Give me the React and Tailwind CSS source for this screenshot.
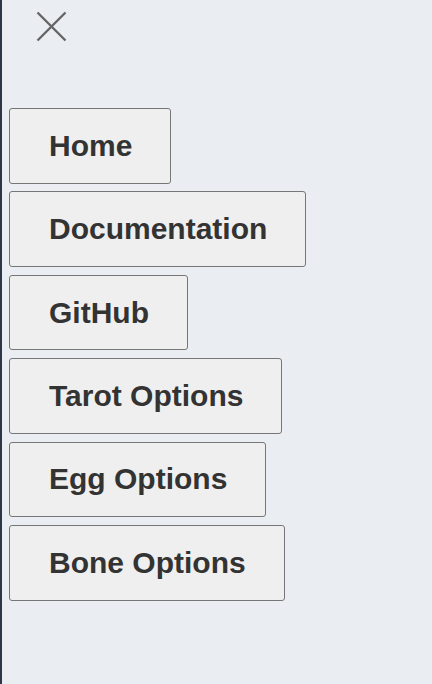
import React from 'react'

const links = ["Home", "Documentation", "GitHub", "Tarot Options", "Egg Options", "Bone Options"]

const App = () => {
  return (
    <main className="min-h-screen bg-[#eaeef2] border-l-2 border-[#2d3748] font-['Liberation_Sans',Arial,sans-serif]">
      <div className="pl-[7px] pt-[11px]">
        <button type="button" className="ml-[27px] w-[31px] h-[31px] flex items-center justify-center text-[#666]" aria-label="Close">
          <svg width="31" height="31" viewBox="0 0 31 31" fill="none" stroke="currentColor" strokeWidth="2.4">
            <path d="M1.5 1.5 L29.5 29.5 M29.5 1.5 L1.5 29.5" />
          </svg>
        </button>

        <nav className="mt-[66px] flex flex-col items-start gap-[7.8px]">
          {links.map((label) => (
            <button
              key={label}
              type="button"
              className="h-[75.6px] pl-[39px] pr-[38px] bg-[#efefef] border border-[#767676] rounded-[3px] text-[30px] font-bold text-[#333] leading-none"
            >
              {label}
            </button>
          ))}
        </nav>
      </div>
    </main>
  )
}

export default App
